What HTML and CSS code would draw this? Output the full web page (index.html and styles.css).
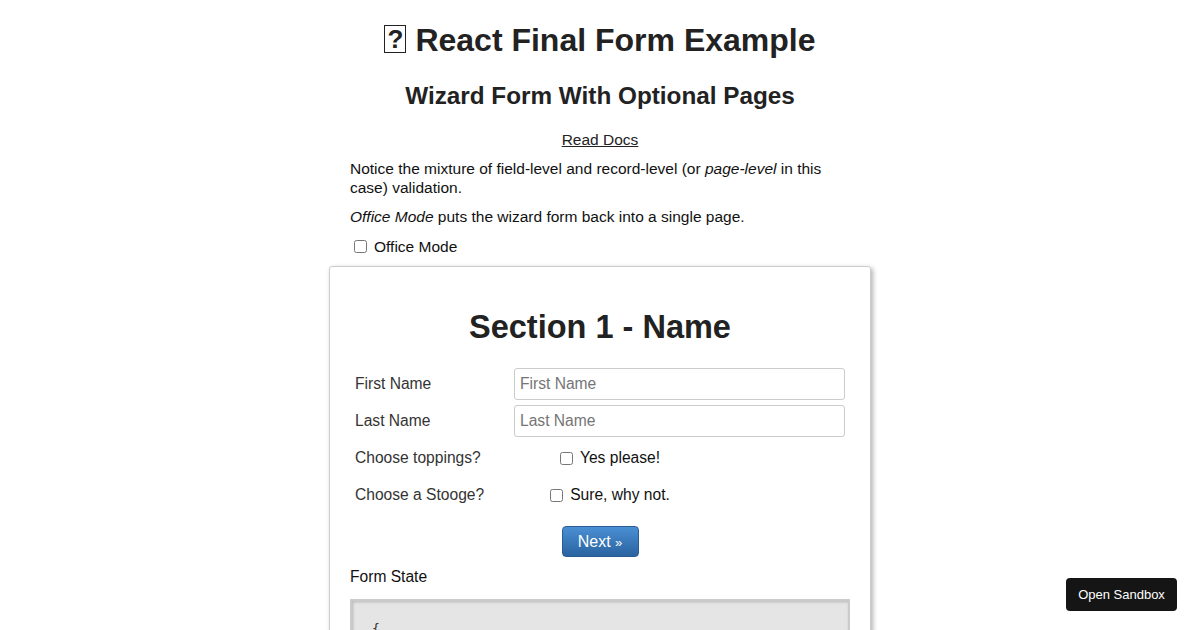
FILE: index.html
```
<!DOCTYPE html>
<html>
<head>
<meta charset="utf-8">
<link rel="stylesheet" href="styles.css">
</head>
<body>
<div class="styles">
  <h1><span class="tofu">?</span> React Final Form Example</h1>
  <h2>Wizard Form With Optional Pages</h2>
  <a class="docs" href="#">Read Docs</a>
  <div class="intro">
    <p class="first">Notice the mixture of field-level and record-level (or <em>page-level</em> in this case) validation.</p>
    <p class="second"><em>Office Mode</em> puts the wizard form back into a single page.</p>
    <label class="office"><input type="checkbox"> Office Mode</label>
  </div>
  <form class="card">
    <h1 class="section">Section 1 - Name</h1>
    <div class="row">
      <label class="lbl">First Name</label>
      <input class="text" type="text" placeholder="First Name">
    </div>
    <div class="row">
      <label class="lbl">Last Name</label>
      <input class="text" type="text" placeholder="Last Name">
    </div>
    <div class="row">
      <label class="lbl">Choose toppings?</label>
      <label class="check"><input type="checkbox"> Yes please!</label>
    </div>
    <div class="row">
      <label class="lbl">Choose a Stooge?</label>
      <label class="check"><input type="checkbox"> Sure, why not.</label>
    </div>
    <div class="buttons">
      <button type="button" class="next">Next <span class="raquo">»</span></button>
    </div>
    <div class="state-label">Form State</div>
    <pre class="state">{
  "active": undefined
}</pre>
  </form>
</div>
<a class="sandbox" href="#">Open Sandbox</a>
</body>
</html>
```
FILE: styles.css
```
html, body {
  margin: 0;
  padding: 0;
  background: #fff;
  overflow: hidden;
}
body {
  padding: 8px;
  font-family: "Liberation Sans", Arial, sans-serif;
  color: #111;
}
.styles h1 {
  text-align: center;
  color: #222;
  font-size: 32px;
  margin: 14px 0 0;
  line-height: 37px;
}
.tofu {
  display: inline-block;
  overflow: hidden;
  border: 1.5px solid #222;
  width: 22px;
  height: 28px;
  line-height: 27px;
  font-size: 26px;
  vertical-align: -2px;
  text-align: center;
  box-sizing: border-box;
}
.styles h2 {
  text-align: center;
  color: #222;
  font-size: 24.3px;
  margin: 23px 0 0;
  line-height: 28px;
}
.docs {
  display: block;
  text-align: center;
  color: #222;
  font-size: 15.5px;
  margin-top: 21px;
  line-height: 18px;
}
.intro {
  width: 500px;
  margin: 0 auto;
  font-size: 15.5px;
  line-height: 19px;
}
.intro p { margin: 0; }
.intro .first { margin-top: 10px; }
.intro .second { margin-top: 10px; }
.office {
  display: flex;
  align-items: center;
  margin-top: 11px;
}
.office input {
  margin: 0 7px 0 4px;
  width: 13px;
  height: 13px;
}
.card {
  width: 500px;
  margin: 10px auto 0;
  border: 1px solid #ccc;
  padding: 20px;
  box-shadow: 2px 2px 5px rgba(0, 0, 0, 0.3);
  border-radius: 3px;
}
.card h1.section {
  font-size: 32.5px;
  margin: 22px 0 22px;
  line-height: 37px;
}
.row {
  display: flex;
  flex-flow: row nowrap;
  margin: 5px;
  height: 32px;
}
.lbl {
  color: #333;
  width: 144px;
  line-height: 32px;
  font-size: 15.6px;
}
.text {
  flex: 1;
  margin-left: 15px;
  padding: 3px 5px;
  font-size: 15.6px;
  font-family: "Liberation Sans", Arial, sans-serif;
  border: 1px solid #ccc;
  border-radius: 3px;
  height: 32px;
  box-sizing: border-box;
}
.text::placeholder { color: #757575; }
.check {
  flex: 1;
  display: flex;
  align-items: center;
  justify-content: center;
  padding-right: 124px;
  font-size: 15.6px;
  color: #111;
}
.check input {
  margin: 0 7px 0 0;
  width: 13px;
  height: 13px;
}
.buttons {
  display: flex;
  justify-content: center;
  margin-top: 15px;
}
.next {
  height: 31px;
  width: 77px;
  padding: 0;
  font-size: 16px;
  font-family: "Liberation Sans", Arial, sans-serif;
  color: #fff;
  background: linear-gradient(to bottom, #4a8fd3, #2a63a0);
  border: 1px solid #2a5d96;
  border-radius: 4px;
}
.raquo { font-size: 13px; }
.state-label {
  margin-top: 11px;
  font-size: 15.6px;
  line-height: 18px;
}
.state {
  margin: 13px 0 0;
  border: 2px solid #ccc;
  background: #e5e5e5;
  box-shadow: inset 1px 1px 3px rgba(0, 0, 0, 0.2);
  padding: 20px;
  font-size: 13px;
  color: #333;
}
.sandbox {
  position: fixed;
  right: 23px;
  bottom: 19px;
  width: 111px;
  height: 33px;
  background: #151515;
  color: #fff;
  border-radius: 4px;
  text-decoration: none;
  font-size: 13px;
  line-height: 33px;
  text-align: center;
}
```
